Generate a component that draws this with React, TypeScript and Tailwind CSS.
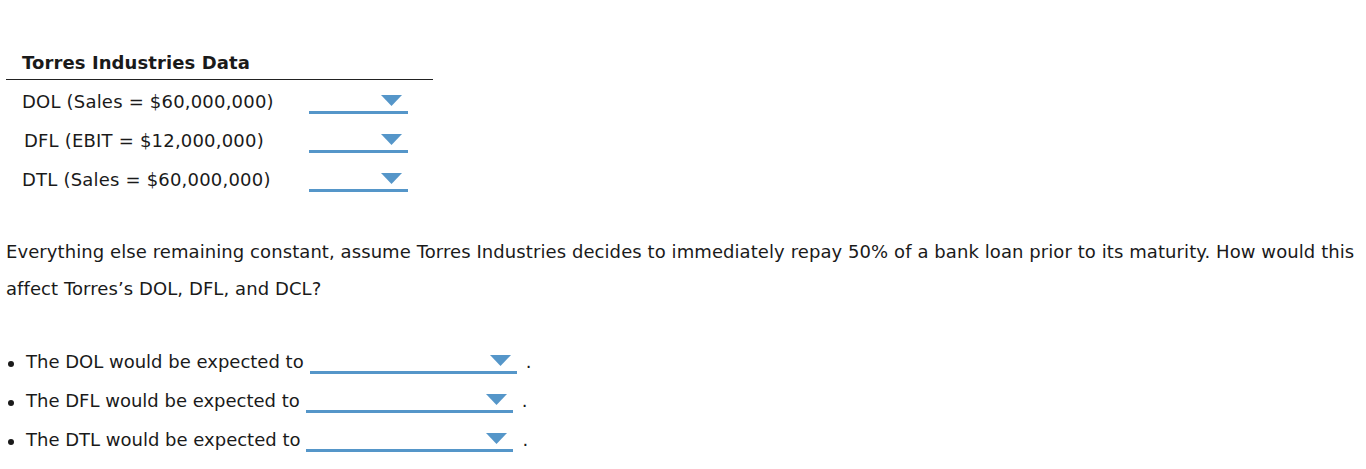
import React from "react";

function Arrow() {
  return (
    <svg width="21" height="11" viewBox="0 0 21 11" className="block">
      <polygon points="0,0 21,0 10.5,11" fill="#5596c9" />
    </svg>
  );
}

function Dropdown({ wide }: { wide?: boolean }) {
  return (
    <div
      className={
        (wide ? "w-[207px] " : "w-[99px] ") +
        "h-[24px] border-b-[3px] border-[#5596c9] flex items-center justify-end pr-[6px]"
      }
    >
      <Arrow />
    </div>
  );
}

const rows = [
  { label: "DOL (Sales = $60,000,000)", pl: "pl-[16px]" },
  { label: "DFL (EBIT = $12,000,000)", pl: "pl-[18px]" },
  { label: "DTL (Sales = $60,000,000)", pl: "pl-[16px]" },
];

const bullets = [
  "The DOL would be expected to",
  "The DFL would be expected to",
  "The DTL would be expected to",
];

export default function App() {
  return (
    <div className="min-h-[469px] w-[1366px] bg-white font-['DejaVu_Sans',sans-serif] text-[18px] text-[#1a1a1a] pt-[51px]">
      <div className="ml-[6px] w-[427px]">
        <div className="pl-[16px] pb-[4px] leading-[24px] font-bold tracking-[0.1px] border-b border-[#222]">
          Torres Industries Data
        </div>
        <div className="pt-[2px]">
          {rows.map((r) => (
            <div key={r.label} className="flex items-center h-[39px]">
              <div className={"w-[303px] leading-[24px] tracking-[0.2px] " + r.pl}>{r.label}</div>
              <Dropdown />
            </div>
          ))}
        </div>
      </div>

      <p className="mt-[34px] ml-[6px] leading-[37px] tracking-[0.08px]">
        Everything else remaining constant, assume Torres Industries decides to immediately repay 50% of a bank loan prior to its maturity. How would this affect Torres’s DOL, DFL, and DCL?
      </p>

      <div className="mt-[35px]">
        {bullets.map((b) => (
          <div key={b} className="flex items-center h-[39px]">
            <div className="ml-[8px] mt-[5px] w-[6px] h-[6px] rounded-full bg-[#1a1a1a]" />
            <span className="ml-[12px] leading-[24px]">{b}</span>
            <div className="ml-[6px]">
              <Dropdown wide />
            </div>
            <span className="ml-[9px] leading-[24px]">.</span>
          </div>
        ))}
      </div>
    </div>
  );
}
